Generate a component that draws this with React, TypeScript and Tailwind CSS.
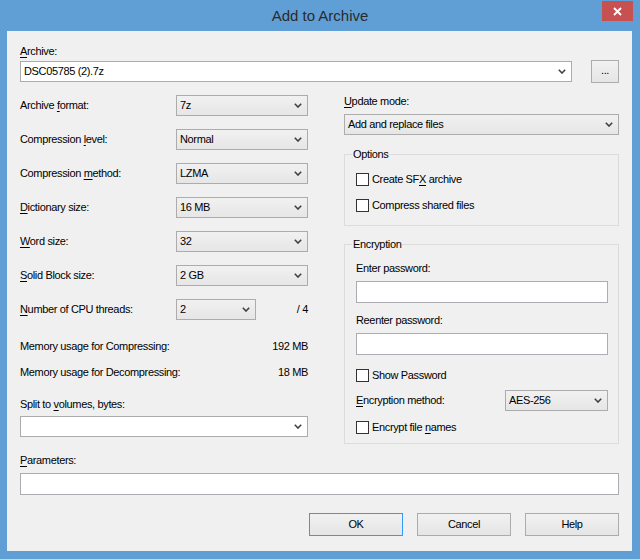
import React from 'react'
import clsx from 'clsx'

const Chevron = () => (
  <svg width="8" height="5" viewBox="0 0 8 5" className="shrink-0">
    <path d="M0.8 0.8l3.2 3.2 3.2-3.2" fill="none" stroke="#404040" strokeWidth="1.6" />
  </svg>
)

const U = ({ children }: { children: React.ReactNode }) => (
  <span className="underline underline-offset-[2px]">{children}</span>
)

function Combo({ value, white, className }: { value?: string; white?: boolean; className?: string }) {
  return (
    <div
      className={clsx(
        'flex h-[21px] items-center justify-between border border-[#acacac] pl-[3px] pr-[5px]',
        white ? 'bg-white' : 'bg-linear-to-b from-[#f1f1f1] to-[#e6e6e6]',
        className
      )}
    >
      <span>{value}</span>
      <Chevron />
    </div>
  )
}

const TextBox = ({ className }: { className?: string }) => (
  <div className={clsx('h-[22px] border border-[#abadb3] bg-white', className)} />
)

const CheckRow = ({ children, className }: { children: React.ReactNode; className?: string }) => (
  <div className={clsx('flex h-[13px] items-center gap-[3px]', className)}>
    <div className="h-[13px] w-[13px] border border-[#333333] bg-white" />
    <span className="leading-[13px]">{children}</span>
  </div>
)

const Btn = ({ children, main }: { children: React.ReactNode; main?: boolean }) => (
  <div
    className={clsx(
      'flex h-[23px] w-[94px] items-center justify-center border bg-linear-to-b from-[#f1f1f1] to-[#e5e5e5]',
      main ? 'border-[#3399ff]' : 'border-[#acacac]'
    )}
  >
    {children}
  </div>
)

const GroupBox = ({ title, children, className }: { title: string; children: React.ReactNode; className?: string }) => (
  <div className={clsx('flex flex-col border border-[#dcdcdc] pl-[11px] pr-[10px]', className)}>
    <div className="-mt-[7px] -ml-[4px] h-[13px] w-fit bg-[#f0f0f0] px-[1px] leading-[13px]">{title}</div>
    {children}
  </div>
)

export default function App() {
  const rows: [React.ReactNode, string][] = [
    [<>Archive <U>f</U>ormat:</>, '7z'],
    [<>Compression <U>l</U>evel:</>, 'Normal'],
    [<>Compression <U>m</U>ethod:</>, 'LZMA'],
    [<><U>D</U>ictionary size:</>, '16 MB'],
    [<><U>W</U>ord size:</>, '32'],
    [<><U>S</U>olid Block size:</>, '2 GB'],
  ]

  return (
    <div className="flex h-[559px] w-[640px] flex-col bg-[#5f9fd6] font-['Liberation_Sans',Arial,sans-serif] text-[11px] tracking-[-0.35px] text-black">
      {/* title bar */}
      <div className="grid h-[31px] grid-cols-[1fr_auto_1fr]">
        <div />
        <div className="text-[15px] leading-[31px] tracking-normal text-[#2b2b2b]">Add to Archive</div>
        <div className="flex justify-end pr-[7px] pt-[1px]">
          <div className="flex h-[20px] w-[31px] items-center justify-center bg-[#c75050]">
            <svg width="9" height="9" viewBox="0 0 9 9">
              <path d="M1 1l7 7M8 1l-7 7" stroke="#fff" strokeWidth="1.9" />
            </svg>
          </div>
        </div>
      </div>

      {/* client area */}
      <div className="ml-[7px] mr-[8px] flex h-[520px] flex-col bg-[#f0f0f0] pl-[13px] pr-[13px] pt-[14px]">
        <div className="h-[13px] leading-[13px]">
          <U>A</U>rchive:
        </div>
        <div className="mt-[2px] flex h-[23px] items-center gap-[19px]">
          <Combo white value="DSC05785 (2).7z" className="flex-1" />
          <div className="flex h-[23px] w-[28px] items-center justify-center border border-[#acacac] bg-linear-to-b from-[#f1f1f1] to-[#e5e5e5] pb-[3px]">
            ...
          </div>
        </div>

        <div className="mt-[11px] flex justify-between">
          {/* left column */}
          <div className="flex w-[288px] flex-col">
            {rows.map(([label, value], i) => (
              <div key={i} className={clsx('flex h-[21px] items-center justify-between', i === 0 ? 'mt-[1px]' : 'mt-[13px]')}>
                <span>{label}</span>
                <Combo value={value} className="w-[132px]" />
              </div>
            ))}
            <div className="mt-[13px] flex h-[21px] items-center">
              <span className="w-[156px]">
                <U>N</U>umber of CPU threads:
              </span>
              <Combo value="2" className="w-[80px]" />
              <span className="ml-auto">/ 4</span>
            </div>
            <div className="mt-[20px] flex h-[13px] items-center justify-between">
              <span>Memory usage for Compressing:</span>
              <span>192 MB</span>
            </div>
            <div className="mt-[13px] flex h-[13px] items-center justify-between">
              <span>Memory usage for Decompressing:</span>
              <span>18 MB</span>
            </div>
            <div className="mt-[19px] h-[13px] leading-[13px]">
              Split to <U>v</U>olumes, bytes:
            </div>
            <Combo white className="mt-[5px]" />
          </div>

          {/* right column */}
          <div className="flex w-[275px] flex-col">
            <div className="mt-[1px] h-[13px] leading-[13px]">
              <U>U</U>pdate mode:
            </div>
            <Combo value="Add and replace files" className="mt-[6px]" />

            <GroupBox title="Options" className="mt-[19px] pb-[13px]">
              <CheckRow className="mt-[12px]">
                Create SF<U>X</U> archive
              </CheckRow>
              <CheckRow className="mt-[13px]">Compress shared files</CheckRow>
            </GroupBox>

            <GroupBox title="Encryption" className="mt-[18px] pb-[9px]">
              <div className="mt-[11px] h-[13px] leading-[13px]">Enter password:</div>
              <TextBox className="mt-[6px]" />
              <div className="mt-[11px] h-[13px] leading-[13px]">Reenter password:</div>
              <TextBox className="mt-[6px]" />
              <CheckRow className="mt-[14px]">Show Password</CheckRow>
              <div className="mt-[8px] flex h-[21px] items-center justify-between">
                <span>
                  <U>E</U>ncryption method:
                </span>
                <Combo value="AES-256" className="w-[103px]" />
              </div>
              <CheckRow className="mt-[10px]">
                Encrypt file <U>n</U>ames
              </CheckRow>
            </GroupBox>
          </div>
        </div>

        <div className="mt-[10px] h-[13px] leading-[13px]">
          <U>P</U>arameters:
        </div>
        <TextBox className="mt-[6px]" />

        <div className="mt-[18px] flex justify-end gap-[14px]">
          <Btn main>OK</Btn>
          <Btn>Cancel</Btn>
          <Btn>Help</Btn>
        </div>
      </div>
    </div>
  )
}
